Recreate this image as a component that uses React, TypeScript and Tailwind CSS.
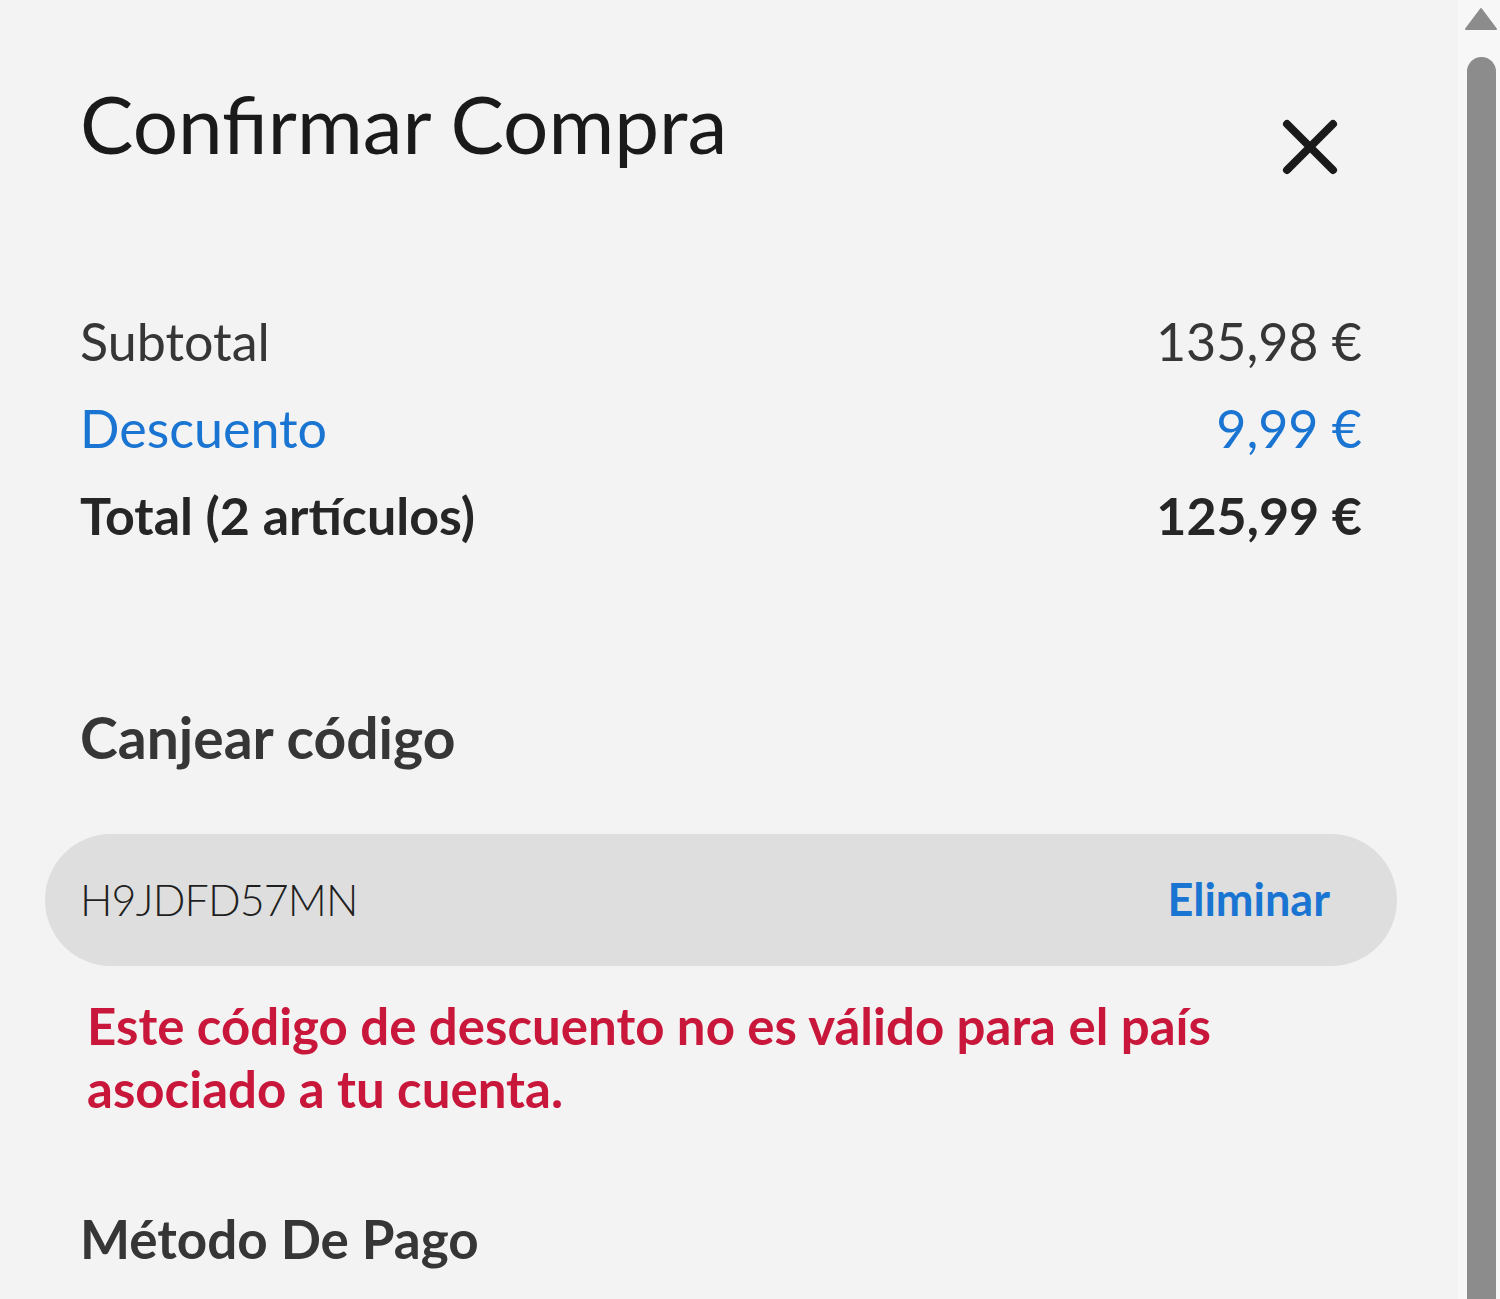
import React from 'react';

const rows = [
    { label: 'Subtotal', value: '135,98 €', tone: 'text-[#363636] font-normal' },
    { label: 'Descuento', value: '9,99 €', tone: 'text-[#1a75d2] font-normal' },
    { label: 'Total (2 artículos)', value: '125,99 €', tone: 'text-[#262626] font-bold' },
];

const CloseIcon = () => (
    <svg width="56" height="56" viewBox="0 0 56 56" fill="none" className="block">
        <path d="M5 5 L51 51 M51 5 L5 51" stroke="#1a1a1a" strokeWidth="8" strokeLinecap="round" />
    </svg>
);

const Scrollbar = () => (
    <div className="flex w-[42px] flex-col items-center bg-[#f7f7f7] pl-[4px]">
        <svg width="34" height="24" viewBox="0 0 34 24" className="mt-[7px] block">
            <path d="M17 2 L32 22 L2 22 Z" fill="#8c8c8c" strokeLinejoin="round" stroke="#8c8c8c" strokeWidth="2" />
        </svg>
        <div className="mt-[26px] w-[29px] flex-1 rounded-t-full bg-[#8c8c8c]" />
    </div>
);

const App = () => {
    return (
        <div
            className="flex h-[1299px] w-[1500px] overflow-hidden bg-[#f3f3f3]"
            style={{ fontFamily: 'Lato, "Open Sans", sans-serif' }}
        >
            <div className="flex-1 pl-[80px] pr-[96px] pt-[83px]">
                <div className="flex items-start justify-between">
                    <h1 className="text-[80px] font-normal leading-[80px] text-[#1a1a1a]">Confirmar Compra</h1>
                    <button className="mr-[24px] mt-[36px] block">
                        <CloseIcon />
                    </button>
                </div>

                <div className="mt-[123px]">
                    {rows.map((row) => (
                        <div key={row.label} className={`flex h-[87px] items-center justify-between text-[52px] leading-[87px] ${row.tone}`}>
                            <span>{row.label}</span>
                            <span>{row.value}</span>
                        </div>
                    ))}
                </div>

                <h2 className="mt-[152px] text-[57px] font-bold leading-[52px] text-[#363636]">Canjear código</h2>

                <div className="-ml-[35px] -mr-[35px] mt-[71px] flex h-[132px] items-center justify-between rounded-full bg-[#dedede] pl-[35px] pr-[67px]">
                    <span className="text-[43px] font-light tracking-[-0.02em] text-[#1f1f1f]">H9JDFD57MN</span>
                    <button className="text-[45px] font-bold text-[#1a75d2]">Eliminar</button>
                </div>

                <p className="mt-[28px] max-w-[1220px] pl-[7px] text-[51px] font-bold leading-[63px] text-[#c8173a]">
                    Este código de descuento no es válido para el país asociado a tu cuenta.
                </p>

                <h2 className="mt-[93px] text-[53px] font-bold leading-[52px] text-[#363636]">Método De Pago</h2>
            </div>
            <Scrollbar />
        </div>
    );
};

export default App;
